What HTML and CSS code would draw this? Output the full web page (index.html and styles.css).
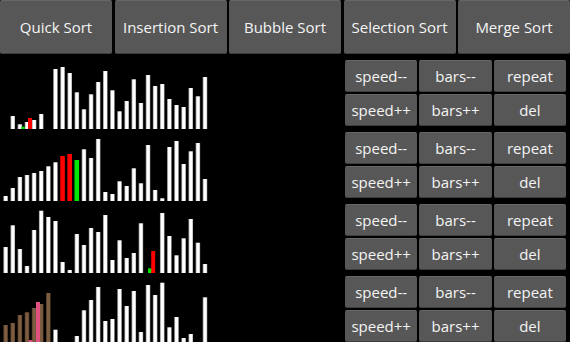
FILE: index.html
```html
<!DOCTYPE html>
<html>
<head lang="en">
    <meta charset="UTF-8">
    <title>Sorts</title>
    <link rel="stylesheet" href="styles.css">
</head>
<body>
<svg class="defs" width="0" height="0">
    <defs>
        <linearGradient id="gWhite" x1="0" x2="1" y1="0" y2="0">
            <stop offset="0" stop-color="#808080"/>
            <stop offset="0.3" stop-color="#ffffff"/>
            <stop offset="0.75" stop-color="#ffffff"/>
            <stop offset="1" stop-color="#9a9a9a"/>
        </linearGradient>
        <linearGradient id="gBrown" x1="0" x2="1" y1="0" y2="0">
            <stop offset="0" stop-color="#4a3422"/>
            <stop offset="0.3" stop-color="#7d5d41"/>
            <stop offset="0.75" stop-color="#7d5d41"/>
            <stop offset="1" stop-color="#4f3826"/>
        </linearGradient>
    </defs>
</svg>
<div class="top">
    <div class="btn">Quick Sort</div>
    <div class="btn">Insertion Sort</div>
    <div class="btn">Bubble Sort</div>
    <div class="btn">Selection Sort</div>
    <div class="btn">Merge Sort</div>
</div>
<div class="rows">
    <div class="row">
        <svg class="chart" viewBox="0 0 215 72"></svg>
        <div class="ctrl">
            <div class="btn">speed--</div><div class="btn">bars--</div><div class="btn">repeat</div>
            <div class="btn">speed++</div><div class="btn">bars++</div><div class="btn">del</div>
        </div>
    </div>
    <div class="row">
        <svg class="chart" viewBox="0 0 215 72"></svg>
        <div class="ctrl">
            <div class="btn">speed--</div><div class="btn">bars--</div><div class="btn">repeat</div>
            <div class="btn">speed++</div><div class="btn">bars++</div><div class="btn">del</div>
        </div>
    </div>
    <div class="row">
        <svg class="chart" viewBox="0 0 215 72"></svg>
        <div class="ctrl">
            <div class="btn">speed--</div><div class="btn">bars--</div><div class="btn">repeat</div>
            <div class="btn">speed++</div><div class="btn">bars++</div><div class="btn">del</div>
        </div>
    </div>
    <div class="row">
        <svg class="chart" viewBox="0 0 215 72"></svg>
        <div class="ctrl">
            <div class="btn">speed--</div><div class="btn">bars--</div><div class="btn">repeat</div>
            <div class="btn">speed++</div><div class="btn">bars++</div><div class="btn">del</div>
        </div>
    </div>
</div>
<script src="script.js"></script>
</body>
</html>
```

FILE: styles.css
```css
*{
    margin: 0;
    padding: 0;
}
html,body{
    width: 100%;
    height: 100%;
    background: #000;
    overflow: hidden;
}
body{
    font-family: "Open Sans", "DejaVu Sans", sans-serif;
    color: #f4f4f4;
}
.defs{
    position: absolute;
}
.btn{
    box-sizing: border-box;
    background: #575757;
    border-radius: 2px;
    border-top: 1px solid #676767;
    border-bottom: 1px solid #3e3e3e;
    display: flex;
    align-items: center;
    justify-content: center;
    font-size: 15px;
    white-space: nowrap;
}
.top{
    display: flex;
    gap: 2.5px;
    height: 54px;
}
.top .btn{
    flex: 1;
}
.rows{
    margin-top: 3px;
}
.row{
    display: flex;
    height: 72px;
}
.chart{
    display: block;
    width: 215px;
    height: 72px;
}
.ctrl{
    margin: 3px 4px 0 auto;
    width: 221px;
    height: 66px;
    display: grid;
    grid-template-columns: repeat(3, 1fr);
    grid-template-rows: 32px 32px;
    gap: 2px;
}
```

FILE: script.js
```js
var PITCH = 7.12, X0 = 3.3, W = 4.6;
// bar heights per row, 0 = no bar
var rows = [
    [0,13,4.7,7,9,15,0,60,62,56,36.7,19.7,34.7,47,58,38.7,17.7,28,49.7,26,54,43,45,30,24,22,41,32.7,52],
    [5,13,24,26,28,30,34.7,38.7,45,47,41,51.7,43,62,9,7,19.7,15,32.7,17.7,56,11,2.7,54,60,37,49.7,58,22],
    [26,47.7,24,7,43,62.3,56,52,11,3,39,28,45,41,58,13,32.7,15,20,49.7,0,0,60,37,17.7,34.7,54,30.3,9],
    [20,22,30,32.7,37,41,52,15.3,0,0,9,34.7,45,58,24,26,56,39,54,13,60,50,62.3,17.7,28,7,11,0,47.7]
];
// bars drawn in another colour
var marks = [
    {},
    {8: 'red', 9: 'red', 10: '#00e600'},
    {},
    {0: 'brown', 1: 'brown', 2: 'brown', 3: 'brown', 4: 'brown', 5: 'brown', 6: 'brown'}
];
// extra markers laid over the bars: [x, width, height, colour]
var extra = [
    [[21.3,3.4,2.3,'#00e600'],[28,4,11,'red']],
    [],
    [[148,4,4.7,'#00e600'],[151.2,4,22,'red']],
    [[36,4,43,'#e0517f'],[29,3.5,5,'#e0517f']]
];
var NS = 'http://www.w3.org/2000/svg';
var charts = document.querySelectorAll('.chart');
function bar(svg, x, w, h, fill){
    var r = document.createElementNS(NS, 'rect');
    r.setAttribute('x', x);
    r.setAttribute('y', 72 - h);
    r.setAttribute('width', w);
    r.setAttribute('height', h);
    r.setAttribute('fill', fill);
    svg.appendChild(r);
}
for(var i=0;i<rows.length;i++){
    var svg = charts[i];
    for(var j=0;j<rows[i].length;j++){
        var h = rows[i][j];
        if(!h) continue;
        var c = marks[i][j];
        var fill = c == 'brown' ? 'url(#gBrown)' : (c || 'url(#gWhite)');
        bar(svg, X0 + j*PITCH, W, h, fill);
    }
    for(var k=0;k<extra[i].length;k++){
        var e = extra[i][k];
        bar(svg, e[0], e[1], e[2], e[3]);
    }
}
```
